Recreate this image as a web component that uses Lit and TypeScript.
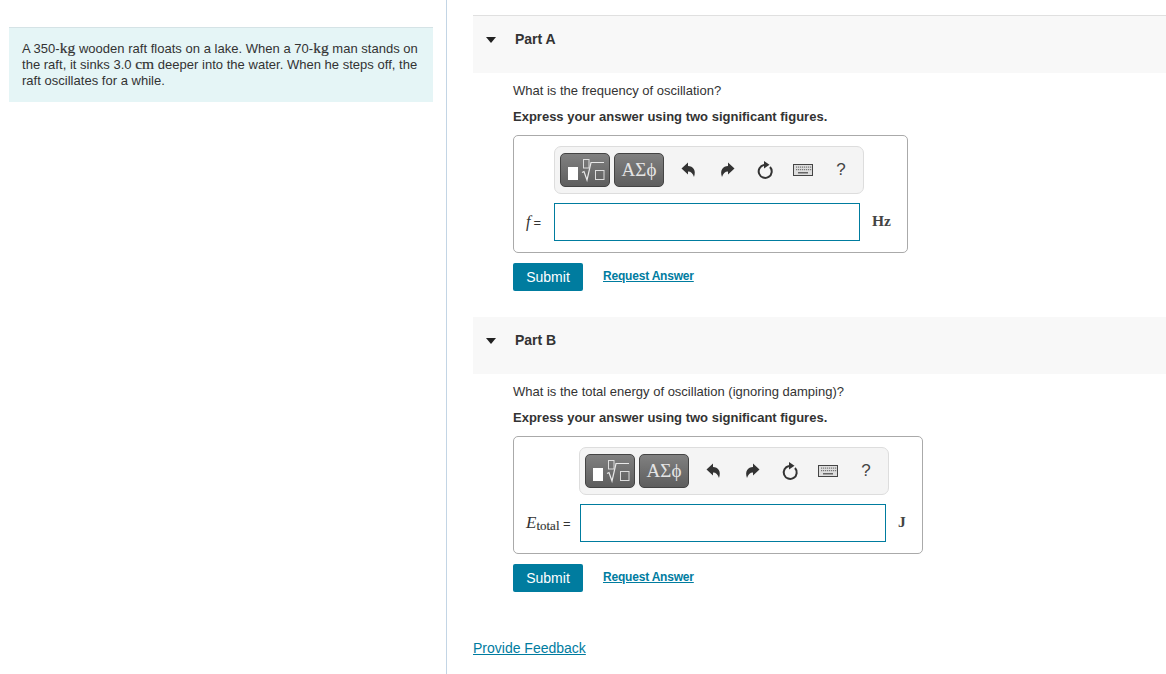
import { LitElement, html, css, svg } from "lit";
import { customElement } from "lit/decorators.js";

const arrow = "M0.5 6.5 L7 0.5 V4 C12 4 15.5 8 13 15 C12 11.5 10 9.5 7 9.5 V12.5 Z";
const radical = html`<svg width="48" height="32" viewBox="0 0 48 32" fill="none">
  <rect x="7" y="13" width="10" height="13" fill="#fff"/>
  <rect x="22.5" y="5.5" width="5.5" height="8.5" stroke="#ddd"/>
  <path d="M21 18.5 L23 17.5 L26 26 L30 8.5 H43" stroke="#e8e8e8" stroke-width="1.2"/>
  <rect x="34.5" y="16.5" width="8.5" height="9" stroke="#ddd"/>
</svg>`;
const undo = html`<svg width="16" height="16" viewBox="0 0 16 16"><path fill="#333" d="${arrow}"/></svg>`;
const redo = html`<svg width="16" height="16" viewBox="0 0 16 16"><path fill="#333" transform="translate(16 0) scale(-1 1)" d="${arrow}"/></svg>`;
const reset = html`<svg width="18" height="20" viewBox="0 0 18 20" fill="none"><path stroke="#333" stroke-width="2" d="M8 5 A6.5 6.5 0 1 0 14 7"/><path fill="#333" d="M8 1 L13.5 4.8 L8 8.6 Z"/></svg>`;
const keys = svg`${[0,1,2,3,4,5,6,7].map(i => svg`<rect x="${3 + i * 2}" y="3.5" width="1.2" height="1.2" fill="#777"/><rect x="${3 + i * 2}" y="6" width="1.2" height="1.2" fill="#777"/>`)}`;
const keyboard = html`<svg width="20" height="14" viewBox="0 0 20 14"><rect x="0.5" y="1.5" width="19" height="11" fill="#ddd" stroke="#444"/>${keys}<rect x="5" y="9" width="10" height="1.5" fill="#666"/></svg>`;

@customElement("app-root")
export class AppRoot extends LitElement {
  static styles = css`
    :host { display: block; height: 674px; overflow: hidden; background: #fff; color: #333; font: 13px/16px "Liberation Sans", Arial, sans-serif; }
    .page { display: flex; height: 674px; }
    .left { width: 446px; flex: none; border-right: 1px solid #c3d5e5; padding-top: 27px; }
    .intro { width: 424px; margin-left: 9px; box-sizing: border-box; height: 75px; padding: 13px 13px 0; background: #e5f5f6; border-top: 1px solid #d5e3e6; letter-spacing: 0.02px; }
    .m { font-family: "Liberation Serif", serif; font-size: 15.5px; line-height: 0; -webkit-text-stroke: 0.2px #333; }
    .right { flex: 1; padding: 15px 0 0 26px; min-width: 0; }
    .head { background: #f8f8f8; border-top: 1px solid #e0e0e0; display: flex; align-items: flex-start; padding-top: 15px; height: 42px; font-size: 14px; font-weight: 700; }
    section + section .head { border-top-color: #fff; }
    .tri { width: 0; height: 0; margin: 6px 19px 0 13px; border-left: 5.5px solid transparent; border-right: 5.5px solid transparent; border-top: 6px solid #222; }
    .body { padding-left: 40px; margin-bottom: 25px; }
    .q { margin: 10px 0 0; }
    .ex { margin: 10px 0 0; font-weight: 700; }
    .box { display: inline-grid; grid-template-columns: auto 306px auto; align-items: center; margin-top: 10px; border: 1px solid #aaa; border-radius: 5px; padding: 10px 0 11px; row-gap: 9px; }
    .tb { grid-column: 2; grid-row: 1; width: 310px; height: 48px; box-sizing: border-box; display: flex; align-items: center; background: #f4f4f4; border: 1px solid #ddd; border-radius: 7px; padding: 0 0 0 5px; }
    .tb.b { margin-left: -1px; }
    .mb { width: 50px; height: 34px; box-sizing: border-box; display: flex; align-items: center; justify-content: center; margin-right: 4px; border: 1px solid #444; border-radius: 5px; background: linear-gradient(#808080, #5e5e5e); color: #e4e4e4; font: 19px "Liberation Serif", serif; }
    .ic { width: 38px; display: flex; justify-content: center; align-items: center; color: #333; }
    .ic.first { margin-left: 2px; }
    .q2 { font-size: 17px; color: #444; }
    .lab { grid-row: 2; padding-left: 12px; box-sizing: border-box; font-size: 13px; white-space: nowrap; }
    .lab.short { width: 40px; }
    .lab.long { width: 66px; }
    .lab i { font: italic 16px "Liberation Serif", serif; margin-right: 3px; }
    .lab i.e { font-size: 17px; margin-right: 0; }
    .sub { font: 13px "Liberation Serif", serif; position: relative; top: 2px; -webkit-text-stroke: 0.15px #333; }
    .inp { grid-row: 2; height: 38px; box-sizing: border-box; border: 1px solid #007c9f; background: #fff; }
    .unit { grid-row: 2; padding: 0 16px 0 12px; font: bold 15.5px "Liberation Serif", serif; color: #444; margin-top: -2px; }
    .act { display: flex; margin-top: 10px; align-items: center; }
    .btn { width: 70px; height: 28px; display: flex; align-items: center; justify-content: center; background: #007c9f; color: #fff; border-radius: 2px; font-size: 14px; }
    .ra { margin: -3px 0 0 20px; color: #007c9f; text-decoration: underline; font-size: 12px; font-weight: 700; letter-spacing: -0.2px; }
    .fb { display: block; margin-top: 48px; color: #007c9f; text-decoration: underline; font-size: 14px; }
  `;

  private part(name: string, q: string, label: unknown, unit: string, cls: string) {
    return html`<section>
      <div class="head"><span class="tri"></span>${name}</div>
      <div class="body">
        <p class="q">${q}</p>
        <p class="ex">Express your answer using two significant figures.</p>
        <div class="box">
          <div class="tb ${cls}">
            <span class="mb">${radical}</span><span class="mb">ΑΣϕ</span>
            <span class="ic first">${undo}</span><span class="ic">${redo}</span><span class="ic">${reset}</span><span class="ic">${keyboard}</span><span class="ic q2">?</span>
          </div>
          <div class="lab ${cls ? "long" : "short"}">${label}</div>
          <div class="inp"></div>
          <div class="unit">${unit}</div>
        </div>
        <div class="act"><span class="btn">Submit</span><span class="ra">Request Answer</span></div>
      </div>
    </section>`;
  }

  render() {
    return html`<div class="page">
      <div class="left"><div class="intro">A 350-<span class="m">kg</span> wooden raft floats on a lake. When a 70-<span class="m">kg</span> man stands on the raft, it sinks 3.0 <span class="m">cm</span> deeper into the water. When he steps off, the raft oscillates for a while.</div></div>
      <div class="right">
        ${this.part("Part A", "What is the frequency of oscillation?", html`<i>f</i>=`, "Hz", "")}
        ${this.part("Part B", "What is the total energy of oscillation (ignoring damping)?", html`<i class="e">E</i><span class="sub">total</span> =`, "J", "b")}
        <span class="fb">Provide Feedback</span>
      </div>
    </div>`;
  }
}
